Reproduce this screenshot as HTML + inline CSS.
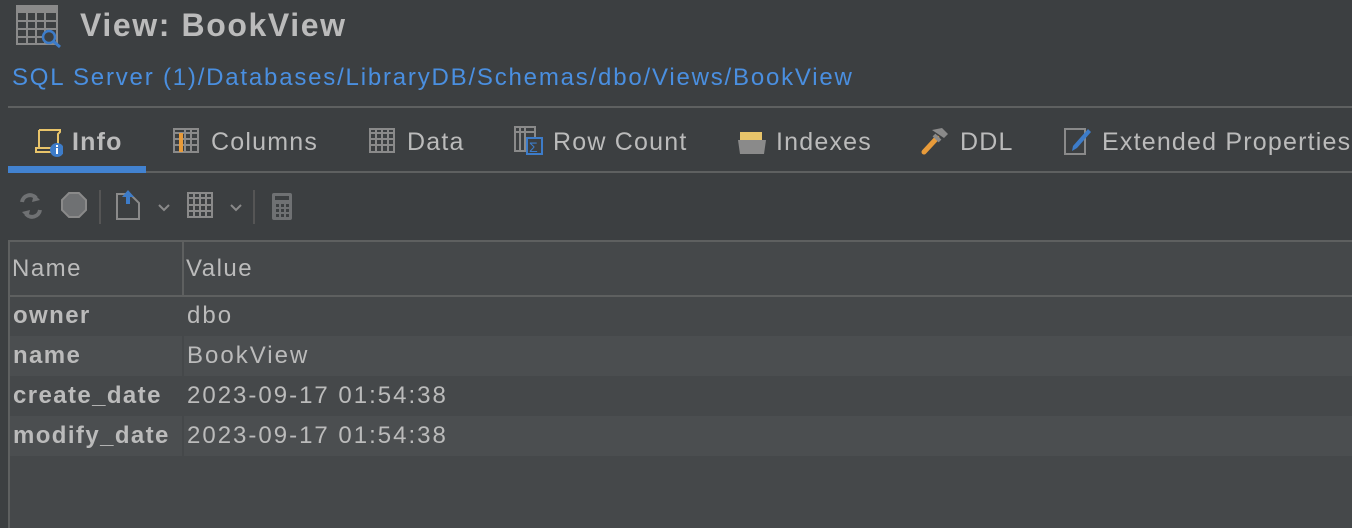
<!DOCTYPE html>
<html><head><style>
body{margin:0;width:1352px;height:526px;background:#3c3f41;font-family:"Liberation Sans",sans-serif;color:#bbbbbb;overflow:hidden;position:relative}
.a{position:absolute;white-space:nowrap}
.tab{position:absolute;top:127px;font-size:25px;color:#bbb;line-height:30px;letter-spacing:1.2px}
.row{position:absolute;left:10px;right:0;height:40px;font-size:24px;line-height:40px}
.row .n{position:absolute;left:3px;font-weight:bold;letter-spacing:1.4px}
.row .v{position:absolute;left:177px;letter-spacing:2px}
</style></head><body>
<svg class="a" style="left:16px;top:5px" width="46" height="44" viewBox="0 0 46 44">
<rect x="1" y="1" width="40" height="38" fill="none" stroke="#8a8a8a" stroke-width="2"/>
<rect x="1" y="1" width="40" height="7" fill="#8a8a8a"/>
<path d="M11 8V39M20 8V39M29 8V39M1 16H41M1 24H41M1 32H41" stroke="#8a8a8a" stroke-width="2"/>
<circle cx="33" cy="32" r="6" fill="#3c3f41" stroke="#3d7cc9" stroke-width="2.5"/>
<path d="M37 36L44 42" stroke="#3d7cc9" stroke-width="3"/>
</svg>
<div class="a" style="left:80px;top:7px;font-size:32px;font-weight:bold;color:#bbb;letter-spacing:1.6px">View: BookView</div>
<div class="a" style="left:12px;top:64px;font-size:24px;color:#4a8fe0;letter-spacing:1.8px">SQL Server (1)/Databases/LibraryDB/Schemas/dbo/Views/BookView</div>
<div class="a" style="left:8px;top:106px;width:1344px;height:2px;background:#5e6060"></div>
<svg class="a" style="left:33px;top:128px" width="30" height="30"><path d="M6 2H27V4L25 6V20H3V24H24" fill="none" stroke="#e8c46a" stroke-width="2"/><path d="M6 2V20" stroke="#e8c46a" stroke-width="2"/><circle cx="24" cy="22" r="7" fill="#3d7cc9"/><rect x="23" y="20" width="2" height="6" fill="#fff"/><rect x="23" y="17" width="2" height="2" fill="#fff"/></svg>
<div class="tab" style="left:72px;font-weight:bold">Info</div>
<svg class="a" style="left:173px;top:128px" width="26" height="26"><rect x="1" y="1" width="24" height="23" fill="none" stroke="#8a8a8a" stroke-width="2"/><path d="M1 5H25M1 11H25M1 17H25M12 1V24M18 1V24" stroke="#8a8a8a" stroke-width="2"/><rect x="6" y="5" width="4" height="19" fill="#e89b3a"/></svg>
<div class="tab" style="left:211px">Columns</div>
<svg class="a" style="left:369px;top:128px" width="26" height="26"><rect x="1" y="1" width="24" height="23" fill="none" stroke="#8a8a8a" stroke-width="2"/><path d="M1 5H25M1 11H25M1 17H25M7 1V24M13 1V24M19 1V24" stroke="#8a8a8a" stroke-width="2"/></svg>
<div class="tab" style="left:407px">Data</div>
<svg class="a" style="left:514px;top:126px" width="30" height="30"><rect x="1" y="1" width="20" height="24" fill="none" stroke="#8a8a8a" stroke-width="2"/><path d="M1 6H21M6 1V25M11 1V25" stroke="#8a8a8a" stroke-width="2"/><rect x="13" y="12" width="15" height="16" fill="#3c3f41" stroke="#3d7cc9" stroke-width="2"/><text x="15" y="26" font-size="14" fill="#3d7cc9" font-family="Liberation Sans">Σ</text></svg>
<div class="tab" style="left:553px">Row Count</div>
<svg class="a" style="left:737px;top:130px" width="30" height="26"><rect x="3" y="2" width="22" height="10" fill="#e8c46a"/><path d="M1 10H29L27 24H3Z" fill="#8a8a8a"/></svg>
<div class="tab" style="left:776px">Indexes</div>
<svg class="a" style="left:920px;top:126px" width="32" height="30"><path d="M12 4L22 2L28 8L24 12L18 8Z" fill="#8a8a8a"/><path d="M17 12L4 26" stroke="#e89b3a" stroke-width="5" stroke-linecap="round"/><path d="M14 9L20 15" stroke="#8a8a8a" stroke-width="4"/></svg>
<div class="tab" style="left:960px">DDL</div>
<svg class="a" style="left:1064px;top:126px" width="30" height="30"><rect x="1" y="3" width="20" height="25" fill="none" stroke="#8a8a8a" stroke-width="2"/><path d="M24 3L9 20L8 25L13 22L27 6Z" fill="#3d7cc9"/></svg>
<div class="tab" style="left:1102px">Extended Properties</div>
<div class="a" style="left:8px;top:166px;width:138px;height:7px;background:#4282d0"></div>
<div class="a" style="left:146px;top:171px;width:1206px;height:2px;background:#5e6060"></div>
<svg class="a" style="left:16px;top:190px" width="290" height="34">
<path d="M6 12A8 8 0 0 1 20 8M24 20A8 8 0 0 1 10 24" fill="none" stroke="#6f7173" stroke-width="4"/>
<path d="M18 4L24 10L16 12Z M12 28L6 22L14 20Z" fill="#6f7173"/>
<polygon points="53,3 63,3 70,10 70,20 63,27 53,27 46,20 46,10" fill="#6f7173" stroke="#8a8a8a" stroke-width="2"/>
<line x1="84" y1="0" x2="84" y2="34" stroke="#555" stroke-width="2"/>
<path d="M101 4H114L123 13V29H101Z" fill="none" stroke="#8a8a8a" stroke-width="2"/>
<path d="M112 0L118 7H114V14H110V7H106Z" fill="#3d7cc9"/>
<path d="M143 15L148 20L153 15" fill="none" stroke="#8a8a8a" stroke-width="2"/>
<rect x="172" y="3" width="24" height="24" fill="none" stroke="#8a8a8a" stroke-width="2"/>
<path d="M172 8H196M172 15H196M172 21H196M178 3V27M184 3V27M190 3V27" stroke="#8a8a8a" stroke-width="2"/>
<path d="M215 15L220 20L225 15" fill="none" stroke="#8a8a8a" stroke-width="2"/>
<line x1="238" y1="0" x2="238" y2="34" stroke="#555" stroke-width="2"/>
<rect x="256" y="3" width="20" height="27" rx="2" fill="#6f7173"/>
<rect x="259" y="6" width="14" height="4" fill="#3c3f41"/>
<path d="M260 14h3v3h-3zM265 14h3v3h-3zM270 14h3v3h-3zM260 19h3v3h-3zM265 19h3v3h-3zM270 19h3v3h-3zM260 24h3v3h-3zM265 24h3v3h-3zM270 24h3v3h-3z" fill="#3c3f41"/>
</svg>
<div class="a" style="left:8px;top:240px;width:1344px;height:286px;background:#45484a;border-left:2px solid #5e6060;border-top:2px solid #5e6060"></div>
<div class="a" style="left:10px;top:295px;width:1342px;height:2px;background:#5e6060"></div>
<div class="a" style="left:182px;top:242px;width:2px;height:53px;background:#5e6060"></div>
<div class="a" style="left:12px;top:255px;font-size:24px;letter-spacing:1.5px">Name</div>
<div class="a" style="left:186px;top:255px;font-size:24px;letter-spacing:1.5px">Value</div>
<div class="row" style="top:296px"><span class="n">owner</span><span class="v">dbo</span></div>
<div class="row" style="top:336px;background:#4b4e50"><span class="n">name</span><span class="v">BookView</span></div>
<div class="row" style="top:376px"><span class="n">create_date</span><span class="v">2023-09-17 01:54:38</span></div>
<div class="row" style="top:416px;background:#4b4e50"><span class="n">modify_date</span><span class="v">2023-09-17 01:54:38</span></div>
<div class="a" style="left:182px;top:336px;width:2px;height:40px;background:#45484a"></div>
<div class="a" style="left:182px;top:416px;width:2px;height:40px;background:#45484a"></div>
</body></html>
